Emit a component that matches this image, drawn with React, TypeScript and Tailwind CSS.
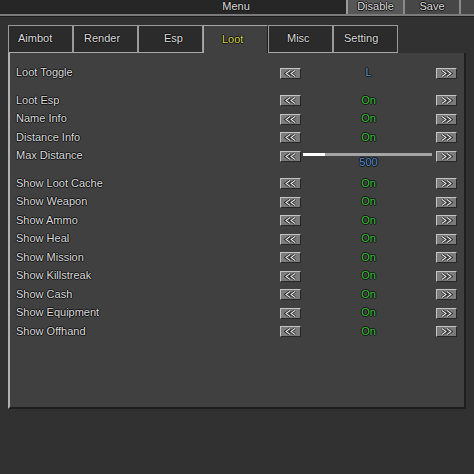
import React from "react";

type Row =
  | { kind: "spacer" }
  | { kind: "value"; label: string; value: string; color: "green" | "blue" }
  | { kind: "slider"; label: string; value: string; pct: number };

const rows: Row[] = [
  { kind: "value", label: "Loot Toggle", value: "L", color: "blue" },
  { kind: "spacer" },
  { kind: "value", label: "Loot Esp", value: "On", color: "green" },
  { kind: "value", label: "Name Info", value: "On", color: "green" },
  { kind: "value", label: "Distance Info", value: "On", color: "green" },
  { kind: "slider", label: "Max Distance", value: "500", pct: 17 },
  { kind: "spacer" },
  { kind: "value", label: "Show Loot Cache", value: "On", color: "green" },
  { kind: "value", label: "Show Weapon", value: "On", color: "green" },
  { kind: "value", label: "Show Ammo", value: "On", color: "green" },
  { kind: "value", label: "Show Heal", value: "On", color: "green" },
  { kind: "value", label: "Show Mission", value: "On", color: "green" },
  { kind: "value", label: "Show Killstreak", value: "On", color: "green" },
  { kind: "value", label: "Show Cash", value: "On", color: "green" },
  { kind: "value", label: "Show Equipment", value: "On", color: "green" },
  { kind: "value", label: "Show Offhand", value: "On", color: "green" },
];

const tabs = [
  { name: "Aimbot", cls: "pl-[9px]" },
  { name: "Render", cls: "pl-[10px]" },
  { name: "Esp", cls: "pl-[25px]" },
  { name: "Loot", cls: "pl-[18px]" },
  { name: "Misc", cls: "pl-[18px]" },
  { name: "Setting", cls: "pl-[10px]" },
];

function ArrowButton({ dir }: { dir: "left" | "right" }) {
  const pts =
    dir === "left"
      ? ["10,2.5 6,5.5 10,8.5", "15,2.5 11,5.5 15,8.5"]
      : ["6,2.5 10,5.5 6,8.5", "11,2.5 15,5.5 11,8.5"];
  return (
    <div className="w-[21px] h-[11px] shrink-0 bg-[#7c7c7c] border-t border-l border-t-[#c4c4c4] border-l-[#c4c4c4] border-b border-r border-b-[#262626] border-r-[#262626] flex items-center justify-center">
      <svg width="19" height="9" viewBox="1 1 19 9">
        {pts.map((p) => (
          <polyline key={p + "o"} points={p} fill="none" stroke="#1e1e1e" strokeWidth="2.8" strokeLinejoin="miter" />
        ))}
        {pts.map((p) => (
          <polyline key={p + "i"} points={p} fill="none" stroke="#e8e8e8" strokeWidth="1.1" strokeLinejoin="miter" />
        ))}
      </svg>
    </div>
  );
}

const outline = "[text-shadow:1px_0_0_#111,-1px_0_0_#111,0_1px_0_#111,0_-1px_0_#111]";

export default function App() {
  return (
    <div
      className="w-[474px] h-[474px] bg-[#313131] overflow-hidden flex flex-col text-[11px] leading-none text-[#dcdcdc]"
      style={{ fontFamily: '"Liberation Sans", Arial, sans-serif' }}
    >
      {/* Top bar */}
      <div className="h-[14px] bg-[#262626] flex shrink-0">
        <div className="flex-1 flex items-center justify-center pl-[126px]">
          <span className={outline + " pb-[2px]"}>Menu</span>
        </div>
        <div className="w-[57px] bg-[#575757] border-l-2 border-l-[#9a9a9a] flex items-center justify-center">
          <span className={outline + " pb-[2px]"}>Disable</span>
        </div>
        <div className="w-[56px] bg-[#474747] border-l-2 border-l-[#8a8a8a] flex items-center justify-center">
          <span className={outline + " pb-[2px]"}>Save</span>
        </div>
        <div className="w-[15px] bg-[#474747] border-l-2 border-l-[#8a8a8a]" />
      </div>
      <div className="h-[2px] bg-[#7a7a7a] shrink-0" />
      <div className="h-[1px] bg-[#1c1c1c] shrink-0" />

      {/* Tabs */}
      <div className="pt-[8px] pl-[8px] flex shrink-0">
        {tabs.map((t) => {
          const active = t.name === "Loot";
          return (
            <div
              key={t.name}
              className={
                "w-[65px] h-[28px] flex items-center border-t border-l border-r pb-[1px] " +
                t.cls +
                (active
                  ? " bg-[#404040] border-t-[#a8a8a8] border-l-[#a8a8a8] border-r-[#1e1e1e]"
                  : " bg-[#2b2b2b] border-t-[#9a9a9a] border-l-[#9a9a9a] border-r-[#9a9a9a] border-b border-b-[#a8a8a8]")
              }
            >
              <span className={outline + (active ? " text-[#d2d24a]" : "")}>{t.name}</span>
            </div>
          );
        })}
      </div>

      {/* Panel */}
      <div className="ml-[8px] w-[458px] h-[356px] bg-[#404040] border-l-2 border-l-[#b0b0b0] border-r-2 border-r-[#1e1e1e] border-b-2 border-b-[#1e1e1e] pt-[11px] shrink-0">
        {rows.map((r, i) => {
          if (r.kind === "spacer") return <div key={i} className="h-[9px]" />;
          return (
            <div key={i} className="h-[18.5px] flex items-center">
              <div className={"w-[270px] pl-[6px] pb-[1px] " + outline}>{r.label}</div>
              <ArrowButton dir="left" />
              <div className="w-[135px] h-full flex items-center justify-center relative">
                {r.kind === "value" ? (
                  <span
                    className={
                      outline +
                      " pb-[1px] " +
                      (r.color === "green" ? "text-[#36c236]" : "text-[#5a9ad8]")
                    }
                  >
                    {r.value}
                  </span>
                ) : (
                  <>
                    <div className="w-[129px] h-[3px] bg-[#a4a4a4] ml-[-2px] mb-[3px]">
                      <div className="h-full bg-white" style={{ width: `${r.pct}%` }} />
                    </div>
                    <span className={"absolute left-0 right-0 top-[10px] text-center text-[#4f8fd0] " + outline}>
                      {r.value}
                    </span>
                  </>
                )}
              </div>
              <ArrowButton dir="right" />
            </div>
          );
        })}
      </div>
    </div>
  );
}
